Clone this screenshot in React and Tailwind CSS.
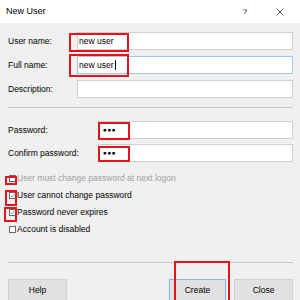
import React from "react";

const RED = "border-2 border-[#e5141c]";

function Check({ checked }) {
  return (
    <div className="ml-[1px] mr-[1px] w-[7px] h-[7px] border border-[#666] bg-white flex items-center justify-center">
      {checked && (
        <svg width="5" height="5" viewBox="0 0 5 5">
          <path d="M0.5 2.6 L1.9 4 L4.5 0.8" stroke="#888" strokeWidth="0.9" fill="none" />
        </svg>
      )}
    </div>
  );
}

export default function App() {
  return (
    <div className="w-[300px] h-[300px] bg-[#f0f0f0] overflow-hidden text-black" style={{ fontFamily: '"Liberation Sans", Arial, sans-serif' }}>
      <div className="h-[23px] bg-white flex items-center pl-[6px] text-[9px]">
        <span className="flex-1">New User</span>
        <span className="w-[10px] text-center text-[8px] mr-[26px]">?</span>
        <svg width="8" height="8" viewBox="0 0 8 8" className="mr-[16px]">
          <path d="M0.5 0.5 L7.5 7.5 M7.5 0.5 L0.5 7.5" stroke="#333" strokeWidth="0.8" />
        </svg>
      </div>

      <div className="pl-[8px] pr-[7px] pt-[9px] text-[8.5px]">
        <div className="flex flex-col gap-[6px]">
          <div className="flex items-center h-[18px]">
            <span className="w-[69px]">User name:</span>
            <div className="relative flex-1 h-[18px] bg-white border border-[#cfcfcf] flex items-center pl-[1px]">
              <span>new user</span>
              <div className={`absolute left-[-9px] top-[0px] w-[60px] h-[19px] ${RED}`} />
            </div>
          </div>
          <div className="flex items-center h-[18px]">
            <span className="w-[69px]">Full name:</span>
            <div className="relative flex-1 h-[18px] bg-white border border-[#9cc8ec] flex items-center pl-[1px]">
              <span>new user</span>
              <span className="w-px h-[10px] bg-black ml-[1px]" />
              <div className={`absolute left-[-9px] top-[-3px] w-[60px] h-[23px] ${RED}`} />
            </div>
          </div>
          <div className="flex items-center h-[18px]">
            <span className="w-[69px]">Description:</span>
            <div className="flex-1 h-[18px] bg-white border border-[#cfcfcf]" />
          </div>
        </div>

        <div className="mt-[9px] h-px bg-[#c4c4c4]" />

        <div className="mt-[13px] flex flex-col gap-[5px]">
          <div className="flex items-center h-[18px]">
            <span className="w-[90px]">Password:</span>
            <div className="relative flex-1 h-[18px] bg-white border border-[#cfcfcf] flex items-center pl-[4px] text-[6.5px] tracking-[0.5px]">
              <span>●●●</span>
              <div className={`absolute left-[-1px] top-[0px] w-[32px] h-[18px] ${RED}`} />
            </div>
          </div>
          <div className="flex items-center h-[18px]">
            <span className="w-[90px]">Confirm password:</span>
            <div className="relative flex-1 h-[18px] bg-white border border-[#cfcfcf] flex items-center pl-[4px] text-[6.5px] tracking-[0.5px]">
              <span>●●●</span>
              <div className={`absolute left-[-1px] top-[1px] w-[32px] h-[16px] ${RED}`} />
            </div>
          </div>
        </div>

        <div className="mt-[8px] flex flex-col">
          <div className="relative flex items-center h-[17px]">
            <Check />
            <span className="text-[#a0a0a0]">User must change password at next logon</span>
            <div className={`absolute left-[-3px] top-[6px] w-[12px] h-[9px] ${RED}`} />
          </div>
          <div className="relative flex items-center h-[17px]">
            <Check checked />
            <span>User cannot change password</span>
            <div className={`absolute left-[-3px] top-[3px] w-[12px] h-[16px] ${RED}`} />
          </div>
          <div className="relative flex items-center h-[17px]">
            <Check checked />
            <span>Password never expires</span>
            <div className={`absolute left-[-4px] top-[3px] w-[13px] h-[15px] ${RED}`} />
          </div>
          <div className="flex items-center h-[17px]">
            <Check />
            <span>Account is disabled</span>
          </div>
        </div>

        <div className="mt-[24px] h-px bg-[#c4c4c4]" />

        <div className="mt-[16px] flex items-start">
          <div className="w-[59px] h-[23px] bg-[#e1e1e1] border border-[#d0d0d0] flex items-center justify-center">Help</div>
          <div className="flex-1" />
          <div className="relative w-[57px] h-[23px] bg-[#e1e1e1] border border-[#7eb4ea] flex items-center justify-center">
            Create
            <div className={`absolute left-[4px] top-[-19px] w-[56px] h-[44px] ${RED}`} />
          </div>
          <div className="ml-[8px] w-[59px] h-[23px] bg-[#e1e1e1] border border-[#d0d0d0] flex items-center justify-center">Close</div>
        </div>
      </div>
    </div>
  );
}
